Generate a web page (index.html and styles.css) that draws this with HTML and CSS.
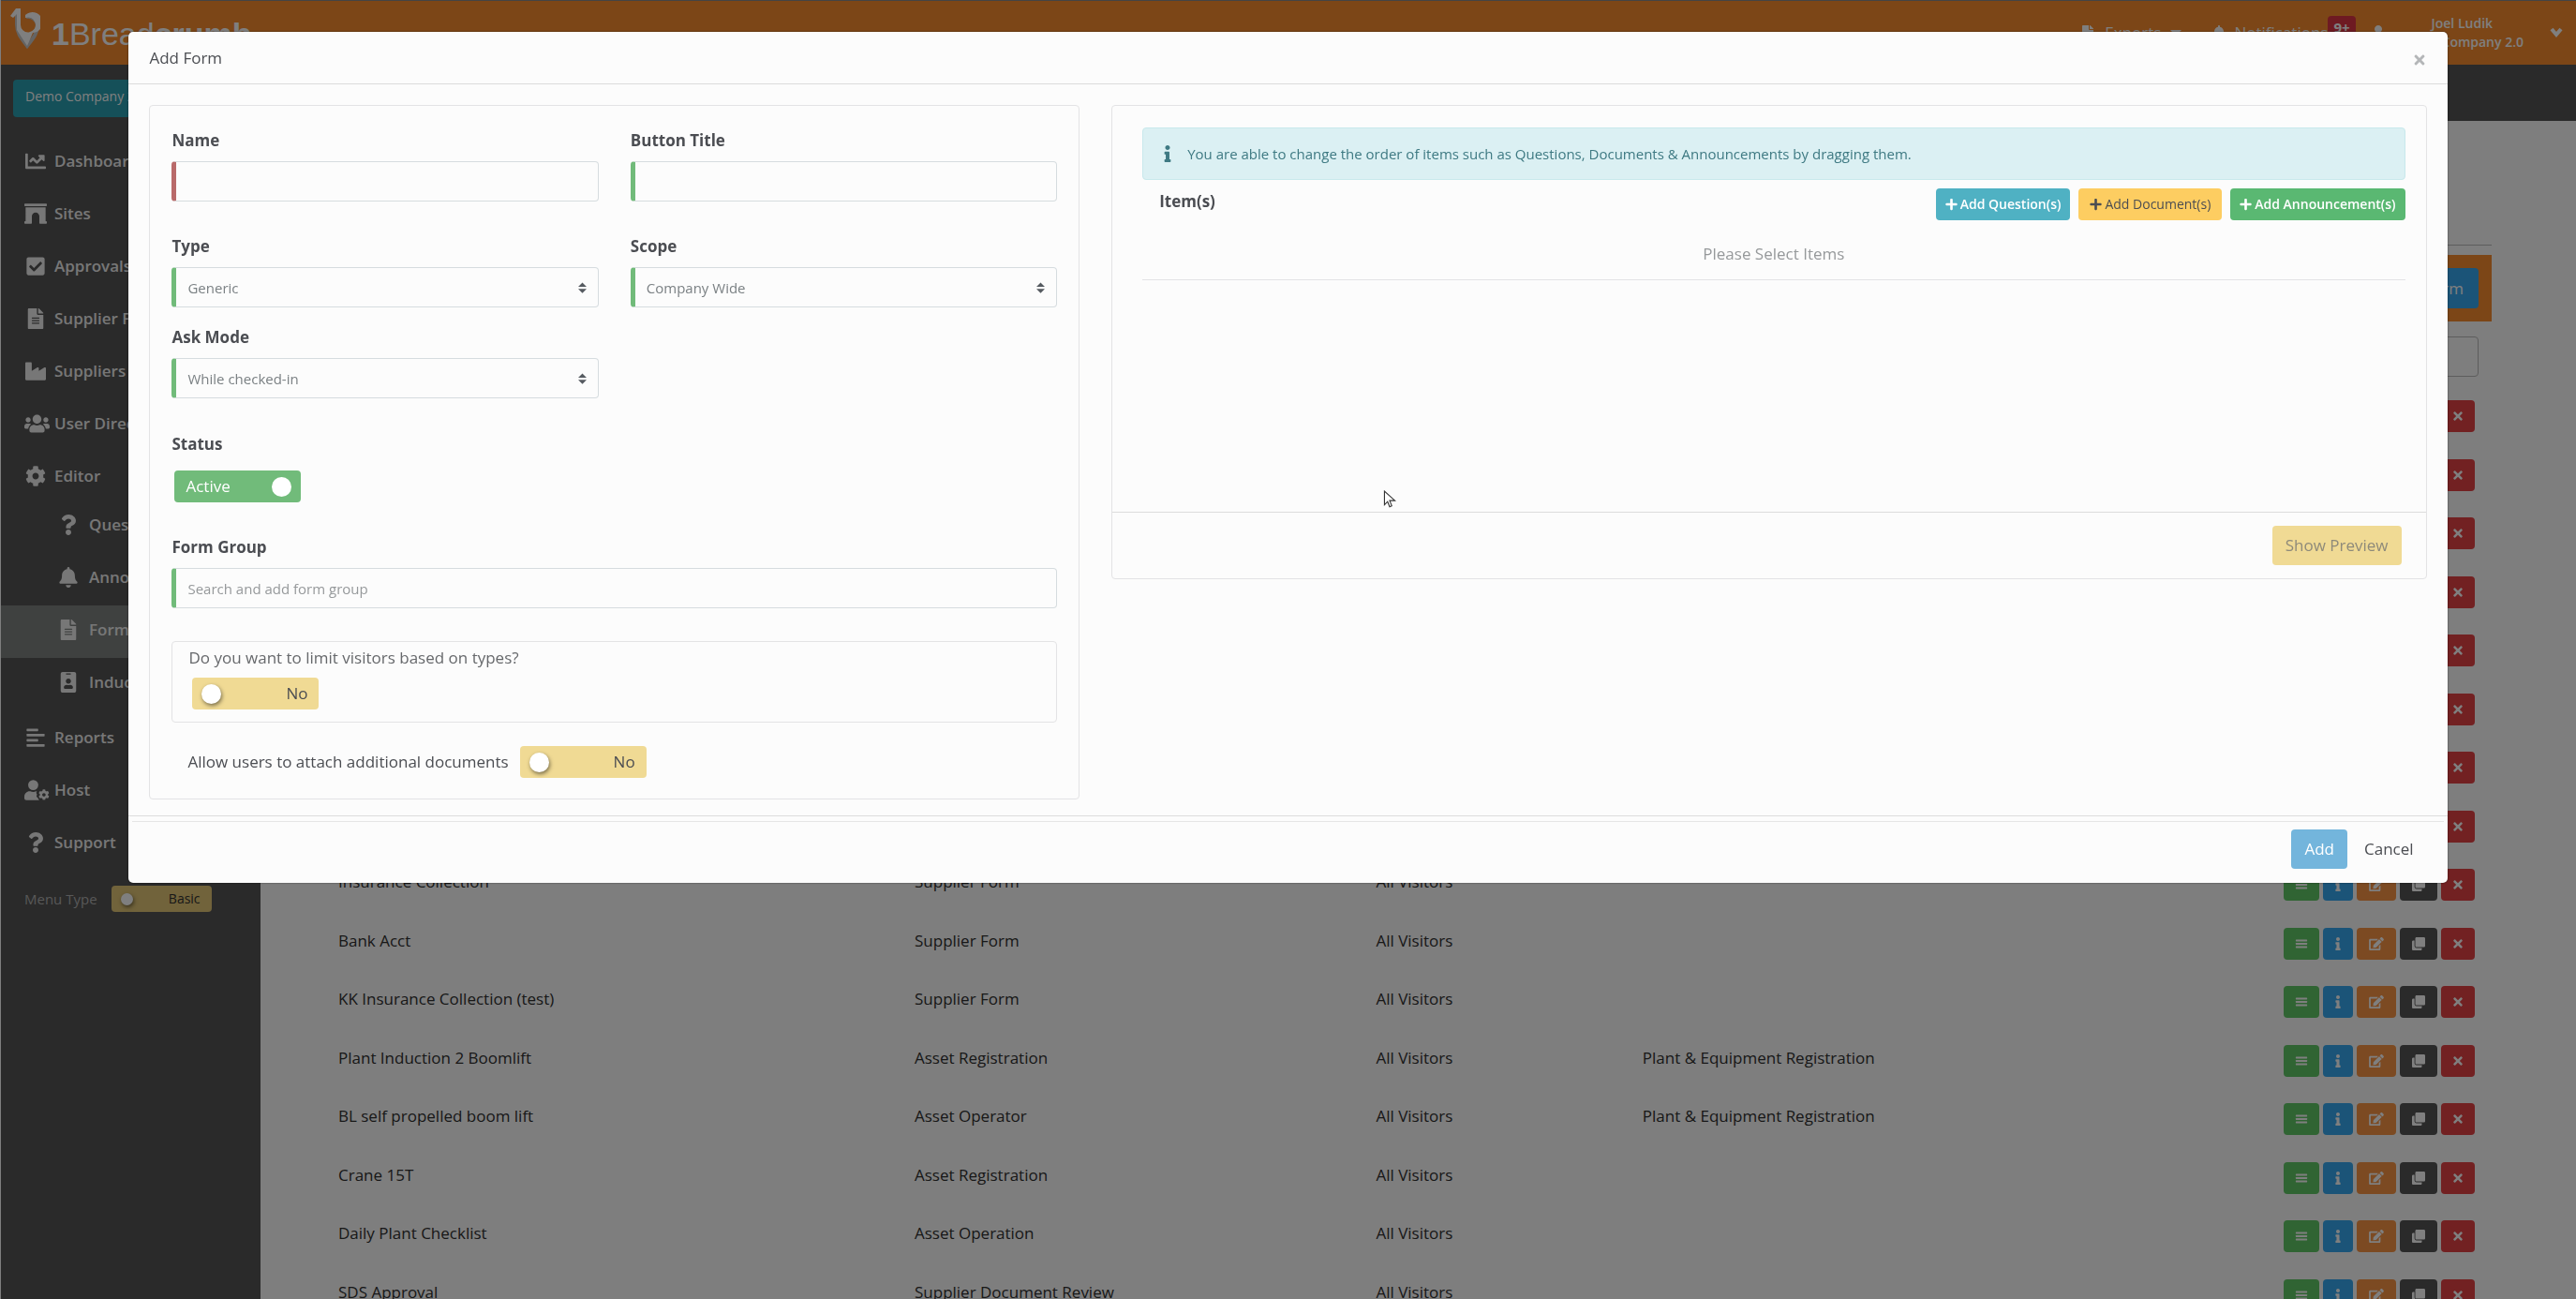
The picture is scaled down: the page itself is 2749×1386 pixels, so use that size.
FILE: index.html
```html
<!DOCTYPE html>
<html lang="en">
<head>
    <meta charset="UTF-8">
    <meta name="viewport" content="width=device-width, initial-scale=1.0">
    <title>1Breadcrumb - Forms</title>
    <link rel="stylesheet" href="styles.css">
</head>
<body>
    <!-- icon sprite -->
    <svg class="sprite" aria-hidden="true">
        <symbol id="chart" viewBox="0 0 512 512"><path d="M496 384H64V80c0-8.84-7.16-16-16-16H16C7.16 64 0 71.16 0 80v336c0 17.67 14.33 32 32 32h464c8.84 0 16-7.16 16-16v-32c0-8.84-7.16-16-16-16zM464 96H345.94c-21.38 0-32.09 25.85-16.97 40.97l32.4 32.4L288 242.75l-73.37-73.37c-12.5-12.5-32.76-12.5-45.25 0l-68.69 68.69c-6.25 6.25-6.25 16.38 0 22.63l22.62 22.62c6.25 6.25 16.38 6.25 22.63 0L192 237.25l73.37 73.37c12.5 12.5 32.76 12.5 45.25 0l96-96 32.4 32.4c15.12 15.12 40.97 4.41 40.97-16.97V112c.01-8.84-7.15-16-15.99-16z"/></symbol>
        <symbol id="archway" viewBox="0 0 576 512"><path d="M560 448h-16V96H32v352H16.02c-8.84 0-16 7.16-16 16v32c0 8.84 7.16 16 16 16H176c8.84 0 16-7.16 16-16V320c0-53.02 42.98-96 96-96s96 42.98 96 96l.02 160v16c0 8.84 7.16 16 16 16H560c8.84 0 16-7.16 16-16v-32c0-8.84-7.16-16-16-16zm0-448H16C7.16 0 0 7.16 0 16v32c0 8.84 7.16 16 16 16h544c8.84 0 16-7.16 16-16V16c0-8.84-7.16-16-16-16z"/></symbol>
        <symbol id="check" viewBox="0 0 448 512"><path d="M400 480H48c-26.51 0-48-21.49-48-48V80c0-26.51 21.49-48 48-48h352c26.51 0 48 21.49 48 48v352c0 26.51-21.49 48-48 48zm-204.686-98.059l184-184c6.248-6.248 6.248-16.379 0-22.627l-22.627-22.627c-6.248-6.248-16.379-6.249-22.628 0L184 302.745l-70.059-70.059c-6.248-6.248-16.379-6.248-22.628 0l-22.627 22.627c-6.248 6.248-6.248 16.379 0 22.627l104 104c6.249 6.25 16.379 6.25 22.628.001z"/></symbol>
        <symbol id="file" viewBox="0 0 384 512"><path d="M224 136V0H24C10.7 0 0 10.7 0 24v464c0 13.3 10.7 24 24 24h336c13.3 0 24-10.7 24-24V160H248c-13.2 0-24-10.8-24-24zm64 236c0 6.6-5.4 12-12 12H108c-6.6 0-12-5.4-12-12v-8c0-6.6 5.4-12 12-12h168c6.6 0 12 5.4 12 12v8zm0-64c0 6.6-5.4 12-12 12H108c-6.6 0-12-5.4-12-12v-8c0-6.6 5.4-12 12-12h168c6.6 0 12 5.4 12 12v8zm0-72v8c0 6.6-5.4 12-12 12H108c-6.6 0-12-5.4-12-12v-8c0-6.6 5.4-12 12-12h168c6.6 0 12 5.4 12 12zm96-114.1v6.1H256V0h6.1c6.4 0 12.5 2.5 17 7l97.9 98c4.5 4.5 7 10.6 7 16.9z"/></symbol>
        <symbol id="industry" viewBox="0 0 512 512"><path d="M475.115 163.781L336 252.309v-68.28c0-18.916-20.931-30.399-36.885-20.248L160 252.309V56c0-13.255-10.745-24-24-24H24C10.745 32 0 42.745 0 56v400c0 13.255 10.745 24 24 24h464c13.255 0 24-10.745 24-24V184.029c0-18.917-20.931-30.399-36.885-20.248z"/></symbol>
        <symbol id="users" viewBox="0 0 640 512"><path d="M96 224c35.3 0 64-28.7 64-64s-28.7-64-64-64-64 28.7-64 64 28.7 64 64 64zm448 0c35.3 0 64-28.7 64-64s-28.7-64-64-64-64 28.7-64 64 28.7 64 64 64zm32 32h-64c-17.6 0-33.5 7.1-45.1 18.6 40.3 22.1 68.9 62 75.1 109.4h66c17.7 0 32-14.3 32-32v-32c0-35.3-28.7-64-64-64zm-256 0c61.9 0 112-50.1 112-112S381.9 32 320 32 208 82.1 208 144s50.1 112 112 112zm76.8 32h-8.3c-20.8 10-43.9 16-68.5 16s-47.6-6-68.5-16h-8.3C179.6 288 128 339.6 128 403.2V432c0 26.5 21.5 48 48 48h288c26.5 0 48-21.5 48-48v-28.8c0-63.6-51.6-115.2-115.2-115.2zm-223.7-13.4C161.5 263.1 145.6 256 128 256H64c-35.3 0-64 28.7-64 64v32c0 17.7 14.3 32 32 32h65.9c6.3-47.4 34.9-87.3 75.2-109.4z"/></symbol>
        <symbol id="cog" viewBox="0 0 512 512"><path d="M487.4 315.7l-42.6-24.6c4.3-23.2 4.3-47 0-70.2l42.6-24.6c4.9-2.8 7.1-8.6 5.5-14-11.1-35.6-30-67.8-54.7-94.6-3.8-4.1-10-5.1-14.8-2.3L380.8 110c-17.9-15.4-38.5-27.3-60.8-35.1V25.8c0-5.6-3.9-10.5-9.4-11.7-36.7-8.2-74.3-7.8-109.2 0-5.5 1.2-9.4 6.1-9.4 11.7V75c-22.2 7.9-42.8 19.8-60.8 35.1L88.7 85.5c-4.9-2.8-11-1.9-14.8 2.3-24.7 26.7-43.6 58.9-54.7 94.6-1.7 5.4.6 11.2 5.5 14L67.3 221c-4.3 23.2-4.3 47 0 70.2l-42.6 24.6c-4.9 2.8-7.1 8.6-5.5 14 11.1 35.6 30 67.8 54.7 94.6 3.8 4.1 10 5.1 14.8 2.3l42.6-24.6c17.9 15.4 38.5 27.3 60.8 35.1v49.2c0 5.6 3.9 10.5 9.4 11.7 36.7 8.2 74.3 7.8 109.2 0 5.5-1.2 9.4-6.1 9.4-11.7v-49.2c22.2-7.9 42.8-19.8 60.8-35.1l42.6 24.6c4.9 2.8 11 1.9 14.8-2.3 24.7-26.7 43.6-58.9 54.7-94.6 1.5-5.5-.7-11.3-5.6-14.1zM256 336c-44.1 0-80-35.9-80-80s35.9-80 80-80 80 35.9 80 80-35.9 80-80 80z"/></symbol>
        <symbol id="question" viewBox="0 0 384 512"><path d="M202.021 0C122.202 0 70.503 32.703 29.914 91.026c-7.363 10.58-5.093 25.086 5.178 32.874l43.138 32.709c10.373 7.865 25.132 6.026 33.253-4.148 25.049-31.381 43.63-49.449 82.757-49.449 30.764 0 68.816 19.799 68.816 49.631 0 22.552-18.617 34.134-48.993 51.164-35.423 19.86-82.299 44.576-82.299 106.405V320c0 13.255 10.745 24 24 24h72.471c13.255 0 24-10.745 24-24v-5.773c0-42.86 125.268-44.645 125.268-160.627C377.504 66.256 286.902 0 202.021 0zM192 373.459c-38.196 0-69.271 31.075-69.271 69.271 0 38.195 31.075 69.27 69.271 69.27s69.271-31.075 69.271-69.271-31.075-69.27-69.271-69.27z"/></symbol>
        <symbol id="bell" viewBox="0 0 448 512"><path d="M224 512c35.32 0 63.97-28.65 63.97-64H160.03c0 35.35 28.65 64 63.97 64zm215.39-149.71c-19.32-20.76-55.47-51.99-55.47-154.29 0-77.7-54.48-139.9-127.94-155.16V32c0-17.67-14.32-32-31.98-32s-31.98 14.33-31.98 32v20.84C118.56 68.1 64.08 130.3 64.08 208c0 102.3-36.15 133.53-55.47 154.29-6 6.45-8.66 14.16-8.61 21.71.11 16.4 12.98 32 32.1 32h383.8c19.12 0 32-15.6 32.1-32 .05-7.55-2.61-15.27-8.61-21.71z"/></symbol>
        <symbol id="badge" viewBox="0 0 384 512"><path d="M336 0H48C21.5 0 0 21.5 0 48v416c0 26.5 21.5 48 48 48h288c26.5 0 48-21.5 48-48V48c0-26.5-21.5-48-48-48zM144 32h96c8.8 0 16 7.2 16 16s-7.2 16-16 16h-96c-8.8 0-16-7.2-16-16s7.2-16 16-16zm48 128c35.3 0 64 28.7 64 64s-28.7 64-64 64-64-28.7-64-64 28.7-64 64-64zm112 236.8c0 10.6-10 19.2-22.4 19.2H102.4C90 416 80 407.4 80 396.8v-19.2c0-31.8 30.1-57.6 67.2-57.6h5c12.3 5.1 25.7 8 39.8 8s27.6-2.9 39.8-8h5c37.1 0 67.2 25.8 67.2 57.6v19.2z"/></symbol>
        <symbol id="align" viewBox="0 0 448 512"><rect y="32" width="288" height="64" rx="14"/><rect y="160" width="448" height="64" rx="14"/><rect y="288" width="288" height="64" rx="14"/><rect y="416" width="448" height="64" rx="14"/></symbol>
        <symbol id="user" viewBox="0 0 448 512"><path d="M224 256c70.7 0 128-57.3 128-128S294.7 0 224 0 96 57.3 96 128s57.3 128 128 128zm89.6 32h-16.7c-22.2 10.2-46.9 16-72.9 16s-50.6-5.8-72.9-16h-16.7C60.2 288 0 348.2 0 422.4V464c0 26.5 21.5 48 48 48h352c26.5 0 48-21.5 48-48v-41.6c0-74.2-60.2-134.4-134.4-134.4z"/></symbol>
        <symbol id="usercog" viewBox="0 0 640 512"><circle cx="224" cy="128" r="128"/><path d="M134 288h17c45 21 101 21 146 0h17c-14 27-18 58 8 78-22 30-18 62 14 82 8 20 22 42 40 64H48c-26 0-48-21-48-48v-42c0-74 60-134 134-134z"/><svg x="350" y="235" width="290" height="277" viewBox="0 0 512 512"><use href="#cog"/></svg></symbol>
        <symbol id="info" viewBox="0 0 192 512"><path d="M20 424.229h20V279.771H20c-11.046 0-20-8.954-20-20V212c0-11.046 8.954-20 20-20h112c11.046 0 20 8.954 20 20v212.229h20c11.046 0 20 8.954 20 20V492c0 11.046-8.954 20-20 20H20c-11.046 0-20-8.954-20-20v-47.771c0-11.046 8.954-20 20-20zM96 0C56.235 0 24 32.235 24 72s32.235 72 72 72 72-32.235 72-72S135.764 0 96 0z"/></symbol>
        <symbol id="edit" viewBox="0 0 576 512"><path d="M402.6 83.2l90.2 90.2c3.8 3.8 3.8 10 0 13.8L274.4 405.6l-92.8 10.3c-12.4 1.4-22.9-9.1-21.5-21.5l10.3-92.8L388.8 83.2c3.8-3.8 10-3.8 13.8 0zm162-22.9l-48.8-48.8c-15.2-15.2-39.9-15.2-55.2 0l-35.4 35.4c-3.8 3.8-3.8 10 0 13.8l90.2 90.2c3.8 3.8 10 3.8 13.8 0l35.4-35.4c15.2-15.3 15.2-40 0-55.2zM384 346.2V448H64V128h229.8c3.2 0 6.2-1.3 8.5-3.5l40-40c7.6-7.6 2.2-20.5-8.5-20.5H48C21.5 64 0 85.5 0 112v352c0 26.5 21.5 48 48 48h352c26.5 0 48-21.5 48-48V306.2c0-10.7-12.9-16-20.5-8.5l-40 40c-2.2 2.3-3.5 5.3-3.5 8.5z"/></symbol>
        <symbol id="clone" viewBox="0 0 512 512"><path d="M464 0c26.51 0 48 21.49 48 48v288c0 26.51-21.49 48-48 48H176c-26.51 0-48-21.49-48-48V48c0-26.51 21.49-48 48-48h288M176 416c-44.112 0-80-35.888-80-80V128H48c-26.51 0-48 21.49-48 48v288c0 26.51 21.49 48 48 48h288c26.51 0 48-21.49 48-48v-48H176z"/></symbol>
        <symbol id="times" viewBox="0 0 352 512"><path d="M242.72 256l100.07-100.07c12.28-12.28 12.28-32.19 0-44.48l-22.24-22.24c-12.28-12.28-32.19-12.28-44.48 0L176 189.28 75.93 89.21c-12.28-12.28-32.19-12.28-44.48 0L9.21 111.45c-12.28 12.28-12.28 32.19 0 44.48L109.28 256 9.21 356.07c-12.28 12.28-12.28 32.19 0 44.48l22.24 22.24c12.28 12.28 32.2 12.28 44.48 0L176 322.72l100.07 100.07c12.28 12.28 32.2 12.28 44.48 0l22.24-22.24c12.28-12.28 12.28-32.19 0-44.48L242.72 256z"/></symbol>
        <symbol id="bars" viewBox="0 0 448 512"><rect y="92" width="448" height="72" rx="16"/><rect y="220" width="448" height="72" rx="16"/><rect y="348" width="448" height="72" rx="16"/></symbol>
        <symbol id="plus" viewBox="0 0 448 512"><path d="M416 208H272V64c0-17.67-14.33-32-32-32h-32c-17.67 0-32 14.33-32 32v144H32c-17.67 0-32 14.33-32 32v32c0 17.67 14.33 32 32 32h144v144c0 17.67 14.33 32 32 32h32c17.67 0 32-14.33 32-32V304h144c17.67 0 32-14.33 32-32v-32c0-17.67-14.33-32-32-32z"/></symbol>
    </svg>

    <div class="app">
        <header class="topbar">
            <a class="logo" href="#">
                <svg class="logo-pin" viewBox="0 0 32 44">
                    <path d="M7 2v16c0 9 4 14 11 23 7-9 11-14 11-22a10 10 0 0 0-12-9" fill="none" stroke="#c8c8c8" stroke-width="4"/>
                    <path d="M0 9 6 1h5v17a8 8 0 1 0 5-7v-3a11 11 0 1 1 8 19l-6 14L7 24V7l-4 4z" fill="#fff"/>
                </svg>
                <span><b>1</b>Bread<b>crumb</b></span>
            </a>
            <nav class="toplinks">
                <a href="#"><svg class="icon"><use href="#file"/></svg>Exports<i class="caret"></i></a>
                <a href="#" class="notify"><svg class="icon"><use href="#bell"/></svg>Notifications<span class="count">9+</span></a>
                <a href="#"><svg class="icon"><use href="#user"/></svg></a>
                <a href="#" class="account">Joel Ludik<br>Demo Company 2.0</a>
                <svg class="chevron" viewBox="0 0 14 12"><path d="M2 2l5 6 5-6" fill="none" stroke="#fff" stroke-width="4"/></svg>
            </nav>
        </header>
        <div class="subbar"><a class="company" href="#">Demo Company 2.0</a></div>

        <div class="layout">
            <aside class="sidebar">
                <ul>
                    <li><a href="#"><svg class="icon"><use href="#chart"/></svg>Dashboard</a></li>
                    <li><a href="#"><svg class="icon"><use href="#archway"/></svg>Sites</a></li>
                    <li><a href="#"><svg class="icon"><use href="#check"/></svg>Approvals</a></li>
                    <li><a href="#"><svg class="icon"><use href="#file"/></svg>Supplier Forms</a></li>
                    <li><a href="#"><svg class="icon"><use href="#industry"/></svg>Suppliers</a></li>
                    <li><a href="#"><svg class="icon wide"><use href="#users"/></svg>User Directory</a></li>
                    <li>
                        <a href="#"><svg class="icon"><use href="#cog"/></svg>Editor</a>
                        <ul class="submenu">
                            <li><a href="#"><svg class="icon"><use href="#question"/></svg>Questions</a></li>
                            <li><a href="#"><svg class="icon"><use href="#bell"/></svg>Announcements</a></li>
                            <li><a href="#" class="active"><svg class="icon"><use href="#file"/></svg>Forms</a></li>
                            <li><a href="#"><svg class="icon"><use href="#badge"/></svg>Inductions</a></li>
                        </ul>
                    </li>
                    <li><a href="#"><svg class="icon"><use href="#align"/></svg>Reports</a></li>
                    <li><a href="#"><svg class="icon wide"><use href="#usercog"/></svg>Host</a></li>
                    <li><a href="#"><svg class="icon"><use href="#question"/></svg>Support</a></li>
                </ul>
                <div class="menu-type">
                    <span>Menu Type</span>
                    <label class="switch small"><input type="checkbox">Basic</label>
                </div>
            </aside>

            <main class="content">
                <div class="toolbar"><button class="new-form" type="button">Add Form</button></div>
                <input class="search" type="search" aria-label="Search">
                <table class="forms">
                    <colgroup><col class="c-name"><col class="c-type"><col class="c-visitors"><col><col class="c-actions"></colgroup>
                    <tbody id="formRows"></tbody>
                </table>
            </main>
        </div>
    </div>

    <div class="backdrop">
        <form class="modal" role="dialog" aria-labelledby="modalTitle">
            <div class="modal-header">
                <h1 id="modalTitle">Add Form</h1>
                <button class="close" type="button" aria-label="Close"><svg class="icon"><use href="#times"/></svg></button>
            </div>

            <div class="modal-body">
                <section class="card details">
                    <div class="field">
                        <label for="name">Name</label>
                        <input class="control invalid" id="name" type="text">
                    </div>
                    <div class="field">
                        <label for="buttonTitle">Button Title</label>
                        <input class="control" id="buttonTitle" type="text">
                    </div>
                    <div class="field second">
                        <label for="type">Type</label>
                        <select class="control" id="type"><option>Generic</option></select>
                    </div>
                    <div class="field second">
                        <label for="scope">Scope</label>
                        <select class="control" id="scope"><option>Company Wide</option></select>
                    </div>
                    <div class="field ask">
                        <label for="askMode">Ask Mode</label>
                        <select class="control" id="askMode"><option>While checked-in</option></select>
                    </div>
                    <div class="field status">
                        <label for="status">Status</label>
                        <label class="switch on">Active<input type="checkbox" id="status" checked></label>
                    </div>
                    <div class="field full">
                        <label for="formGroup">Form Group</label>
                        <input class="control" id="formGroup" type="text" placeholder="Search and add form group">
                    </div>
                    <div class="limit full">
                        <p>Do you want to limit visitors based on types?</p>
                        <label class="switch"><input type="checkbox">No</label>
                    </div>
                    <div class="attach full">
                        <span>Allow users to attach additional documents</span>
                        <label class="switch"><input type="checkbox">No</label>
                    </div>
                </section>

                <section class="card items">
                    <div class="items-body">
                        <div class="alert"><svg class="icon"><use href="#info"/></svg>You are able to change the order of items such as Questions, Documents &amp; Announcements by dragging them.</div>
                        <div class="items-head">
                            <h2>Item(s)</h2>
                            <button class="btn teal" type="button"><svg class="icon"><use href="#plus"/></svg>Add Question(s)</button>
                            <button class="btn yellow" type="button"><svg class="icon"><use href="#plus"/></svg>Add Document(s)</button>
                            <button class="btn green" type="button"><svg class="icon"><use href="#plus"/></svg>Add Announcement(s)</button>
                        </div>
                        <p class="empty">Please Select Items</p>
                    </div>
                    <div class="items-foot"><button class="btn-lg preview" type="button" disabled>Show Preview</button></div>
                </section>
            </div>

            <div class="modal-footer">
                <button class="btn-lg add" type="submit">Add</button>
                <button class="btn-lg cancel" type="button">Cancel</button>
            </div>
        </form>
        <svg class="cursor" viewBox="0 0 12 18"><path d="M1 1v13l3-3 2 5 2-1-2-5h5z" fill="#fff" stroke="#333" stroke-width="1"/></svg>
    </div>

    <script>
        const rows = [
            [], [], [], [], [], [], [], [],
            ['Insurance Collection', 'Supplier Form', 'All Visitors', ''],
            ['Bank Acct', 'Supplier Form', 'All Visitors', ''],
            ['KK Insurance Collection (test)', 'Supplier Form', 'All Visitors', ''],
            ['Plant Induction 2 Boomlift', 'Asset Registration', 'All Visitors', 'Plant & Equipment Registration'],
            ['BL self propelled boom lift', 'Asset Operator', 'All Visitors', 'Plant & Equipment Registration'],
            ['Crane 15T', 'Asset Registration', 'All Visitors', ''],
            ['Daily Plant Checklist', 'Asset Operation', 'All Visitors', ''],
            ['SDS Approval', 'Supplier Document Review', 'All Visitors', '']
        ];
        const actions = ['bars', 'info', 'edit', 'clone', 'times'];
        const tbody = document.getElementById('formRows');

        rows.forEach(row => {
            const tr = tbody.insertRow();
            for (let i = 0; i < 4; i++) {
                tr.insertCell().textContent = row[i] || '';
            }
            tr.insertCell().innerHTML = '<div class="actions">' + actions.map(name =>
                `<button type="button" class="act act-${name}" aria-label="${name}"><svg class="icon"><use href="#${name}"/></svg></button>`
            ).join('') + '</div>';
        });
    </script>
</body>
</html>
```
FILE: styles.css
```css
* {
    box-sizing: border-box;
}
body {
    margin: 0;
    height: 100vh;
    overflow: hidden;
    font-family: "Open Sans", "Noto Sans", sans-serif;
    font-size: 17px;
    line-height: 24px;
    color: #4b4d52;
    background-color: #fcfcfc;
}
button, input, select {
    font: inherit;
    color: inherit;
}
button {
    border: none;
    cursor: pointer;
}
a {
    color: inherit;
    text-decoration: none;
}
ul {
    list-style: none;
    margin: 0;
    padding: 0;
}
.sprite {
    display: none;
}
.icon {
    width: 16px;
    height: 16px;
    fill: currentColor;
    flex: none;
}

/* page behind the dialog */
.app {
    height: 100vh;
    display: flex;
    flex-direction: column;
    border-left: 1px solid #fcfcfc;
}
.topbar {
    height: 69px;
    flex: none;
    display: flex;
    justify-content: space-between;
    align-items: flex-start;
    border-top: 1px solid #888;
    background-color: #f88c2e;
    color: #fff;
}
.logo {
    display: flex;
    gap: 12px;
    padding: 7px 0 0 10px;
    font: 34px/56px "Liberation Sans", Arial, sans-serif;
}
.logo-pin {
    width: 32px;
    height: 44px;
}
.toplinks {
    display: flex;
    align-items: center;
    height: 68px;
    padding-right: 14px;
    gap: 16px;
}
.toplinks a {
    display: flex;
    align-items: center;
    gap: 10px;
}
.caret {
    border: 6px solid transparent;
    border-top-color: #fff;
    border-bottom: none;
}
.toplinks .notify {
    gap: 8px;
    margin-left: 16px;
}
.count {
    align-self: flex-start;
    margin: -6px 0 0 -8px;
    padding: 0 6px;
    border-radius: 4px;
    background-color: #dc3545;
    font-weight: 700;
    font-size: 15px;
}
.toplinks .account {
    display: block;
    margin-right: 12px;
    text-align: center;
    font-weight: 600;
    font-size: 14px;
    line-height: 20px;
}
.chevron {
    width: 14px;
    height: 12px;
}
.subbar {
    height: 60px;
    flex: none;
    padding: 16px 13px;
    background-color: #545454;
}
.company {
    display: block;
    width: 250px;
    height: 40px;
    padding: 0 13px;
    border-radius: 4px;
    background-color: #2aa0b2;
    color: #fff;
    font-size: 14px;
    line-height: 36px;
}
.layout {
    flex: 1;
    display: flex;
    min-height: 0;
}
.sidebar {
    width: 277px;
    flex: none;
    padding-top: 15px;
    background-color: #545454;
    color: #fff;
}
.sidebar a {
    display: flex;
    align-items: center;
    gap: 8px;
    height: 56px;
    padding-left: 25px;
    font-weight: 600;
    opacity: 0.9;
}
.sidebar .icon {
    width: 24px;
    height: 22px;
}
.sidebar .wide {
    width: 27px;
    margin-right: -3px;
}
.sidebar .submenu {
    margin: -2px 0 1px;
}
.submenu a {
    padding: 0 0 4px 60px;
    gap: 10px;
}
.submenu .active {
    background-color: #848886;
}
.menu-type {
    display: flex;
    align-items: center;
    gap: 15px;
    padding: 18px 0 0 25px;
    font-size: 15px;
}
.menu-type > span {
    color: #b0b0b0;
}
.content {
    flex: 1;
    padding: 132px 90px 0 69px;
}
.toolbar {
    display: flex;
    justify-content: flex-end;
    border-top: 1px solid #bbb;
    padding: 24px 14px 14px;
    background: linear-gradient(#fcfcfc 10px, #f88c2e 10px);
}
.new-form {
    height: 43px;
    padding: 0 16px;
    border-radius: 4px;
    background-color: #36a9f0;
    color: #fff;
}
.search {
    display: block;
    width: 300px;
    height: 43px;
    margin: 16px 14px 11px auto;
    border: 1px solid #bbb;
    border-radius: 4px;
    background-color: transparent;
}
.forms {
    width: 100%;
    border-collapse: collapse;
    table-layout: fixed;
    color: #303030;
}
.c-name {
    width: 26.6%;
}
.c-type {
    width: 21.3%;
}
.c-visitors {
    width: 12.3%;
}
.c-actions {
    width: 222px;
}
.forms td {
    height: 62px;
    padding: 0 14px 6px;
}
.forms tr:nth-child(even) td {
    height: 63px;
}
.forms td:last-child {
    padding: 0;
}
.actions {
    display: flex;
    gap: 4px;
}
.act {
    display: flex;
    align-items: center;
    justify-content: center;
    width: 38px;
    height: 34px;
    padding: 0;
    border-radius: 4px;
    color: #fff;
}
.act .icon {
    width: 16px;
    height: 14px;
}
.act-bars {
    background-color: #60c866;
}
.act-info {
    width: 32px;
    background-color: #36a9f0;
}
.act-edit {
    width: 42px;
    background-color: #f89444;
}
.act-clone {
    width: 40px;
    background-color: #545454;
}
.act-times {
    width: 36px;
    background-color: #e44244;
}

/* switches */
.switch {
    display: inline-flex;
    align-items: center;
    justify-content: space-between;
    width: 135px;
    height: 34px;
    padding: 0 12px 0 10px;
    border-radius: 4px;
    background-color: #f0da94;
    color: #4b4d52;
    font-weight: 400;
}
.switch input {
    appearance: none;
    width: 21px;
    height: 21px;
    margin: 0;
    border-radius: 50%;
    background-color: #fff;
    box-shadow: 1px 2px 4px rgba(0, 0, 0, 0.5);
}
.switch.on {
    padding: 0 10px 0 12px;
    background-color: #71bb7a;
    color: #fff;
}
.switch.on input {
    box-shadow: none;
}
.switch.small {
    width: 107px;
    height: 28px;
    background-color: #e2c676;
    color: #303030;
    font-size: 14px;
}
.switch.small input {
    width: 13px;
    height: 13px;
}

/* dialog */
.backdrop {
    position: fixed;
    inset: 0;
    background-color: rgba(0, 0, 0, 0.5);
}
.modal {
    width: 90%;
    margin: 34px auto 0;
    border-radius: 5px;
    background-color: #fcfcfc;
    box-shadow: 0 0 2px rgba(0, 0, 0, 0.6);
}
.modal-header {
    display: flex;
    align-items: center;
    justify-content: space-between;
    height: 56px;
    padding: 0 22px;
    border-bottom: 1px solid #dcdcdc;
}
.modal-header h1 {
    margin: 0;
    font-size: 17px;
    font-weight: 400;
}
.close {
    display: flex;
    padding: 4px 0 0;
    background: none;
    color: #b4b6b8;
}
.modal-body {
    display: grid;
    grid-template-columns: repeat(12, minmax(0, 1fr));
    align-items: start;
    gap: 34px;
    padding: 22px 22px 17px;
}
.card {
    border: 1px solid #e3e3e5;
    border-radius: 4px;
}
.details {
    grid-column: span 5;
    display: grid;
    grid-template-columns: 1fr 1fr;
    column-gap: 34px;
    padding: 25px 23px 22px;
}
.field label:first-child {
    display: block;
    margin-bottom: 10px;
    font-weight: 700;
}
.field.second {
    margin-top: 36px;
}
.field.ask {
    margin-top: 20px;
}
.status {
    grid-column: 1;
    margin-top: 37px;
}
.status .switch {
    margin: 6px 3px 0;
}
.full {
    grid-column: 1 / -1;
}
.field.full {
    margin-top: 36px;
}
.control {
    display: block;
    width: 100%;
    height: 43px;
    padding: 0 12px;
    border: 1px solid #d6dcdf;
    border-left: 5px solid #71bb7a;
    border-radius: 4px;
    background-color: transparent;
    color: #7b8184;
    font-size: 15px;
}
.control.invalid {
    border-left-color: #b96a6a;
}
.control::placeholder {
    color: #96999b;
}
select.control {
    appearance: none;
    background-image: url("data:image/svg+xml,%3Csvg xmlns='http://www.w3.org/2000/svg' viewBox='0 0 4 5'%3E%3Cpath fill='%23555a60' d='M2 0L0 2h4zm0 5L0 3h4z'/%3E%3C/svg%3E");
    background-repeat: no-repeat;
    background-position: right 12px center;
    background-size: 9px 12px;
}
.limit {
    margin-top: 35px;
    padding: 5px 17px 13px;
    border: 1px solid #e3e3e5;
    border-radius: 4px;
    color: #66686b;
}
.limit p {
    margin: 0 0 9px;
}
.limit .switch {
    display: flex;
    margin-left: 4px;
}
.attach {
    display: flex;
    align-items: center;
    gap: 12px;
    margin-top: 25px;
    padding-left: 17px;
}
.items {
    grid-column: span 7;
}
.items-body {
    min-height: 433px;
    padding: 23px 22px 0 32px;
}
.alert {
    display: flex;
    align-items: center;
    gap: 13px;
    height: 56px;
    padding-left: 18px;
    border: 1px solid #c8e9ec;
    border-radius: 4px;
    background-color: #dbf0f3;
    color: #3f7a83;
    font-size: 15px;
}
.alert .icon {
    height: 18px;
}
.items-head {
    display: flex;
    gap: 9px;
    margin-top: 9px;
}
.items-head h2 {
    flex: 1;
    margin: 0;
    padding: 2px 18px;
    font-size: 17px;
    line-height: 24px;
}
.btn {
    display: flex;
    align-items: center;
    gap: 3px;
    height: 34px;
    padding: 0 10px;
    border-radius: 4px;
    color: #fff;
    font-weight: 600;
    font-size: 14px;
}
.btn .icon {
    width: 13px;
    height: 14px;
}
.teal {
    background-color: #4fb1c3;
}
.yellow {
    padding: 0 12px;
    background-color: #fdcd61;
    color: #4b4d52;
    font-weight: 400;
}
.green {
    background-color: #5ab872;
}
.empty {
    margin: 24px 0 0;
    padding-bottom: 15px;
    border-bottom: 1px solid #e3e3e5;
    text-align: center;
    color: #96999b;
}
.items-foot {
    display: flex;
    justify-content: flex-end;
    padding: 14px 26px;
    border-top: 1px solid #dcdcdc;
}
.btn-lg {
    height: 42px;
    padding: 0 14px;
    border-radius: 4px;
}
.preview {
    background-color: #f0da94;
    color: #8e8a7a;
}
.modal-footer {
    display: flex;
    justify-content: flex-end;
    gap: 4px;
    padding: 14px 22px 15px;
    border-top: 1px solid #dcdcdc;
    background: linear-gradient(#e6e6e6, #e6e6e6) center 5px / calc(100% - 8px) 1px no-repeat;
}
.add {
    background-color: #73b5dc;
    color: #fff;
}
.cancel {
    background: none;
}
.cursor {
    position: absolute;
    left: 1476px;
    top: 523px;
    width: 14px;
    height: 20px;
}
```
